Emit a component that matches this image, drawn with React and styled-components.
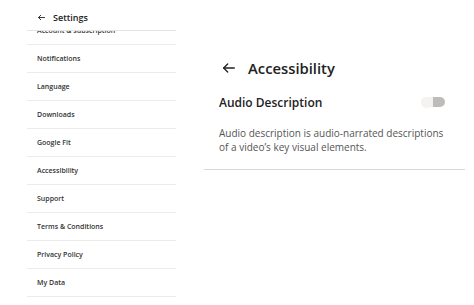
import React from "react";
import styled, { createGlobalStyle } from "styled-components";

const Global = createGlobalStyle`
  html, body { margin: 0; padding: 0; background: #fff; }
  body { font-family: "Open Sans", "Liberation Sans", sans-serif; color: #222; }
  * { box-sizing: border-box; }
`;

const Page = styled.div`
  display: flex;
  width: 474px;
  height: 305px;
  overflow: hidden;
  background: #fff;
`;

const Sidebar = styled.div`
  width: 176px;
  padding-left: 27px;
  display: flex;
  flex-direction: column;
  flex-shrink: 0;
`;

const SideHeader = styled.div`
  height: 31px;
  display: flex;
  align-items: flex-end;
  gap: 7px;
  padding-left: 10px;
  padding-bottom: 6px;
  border-bottom: 1px solid #e4e4e4;
  position: relative;
  z-index: 1;
  background: #fff;
  font-size: 9px;
  font-weight: 600;
  color: #222;
  & > svg { margin-bottom: 2px; }
`;

const Viewport = styled.div`
  flex: 1;
  overflow: hidden;
`;

const List = styled.div`
  margin-top: -14px;
`;

const Row = styled.div`
  height: 28px;
  display: flex;
  align-items: center;
  padding-left: 10px;
  border-bottom: 1px solid #ebebeb;
  font-size: 7px;
  font-weight: 600;
  color: #333;
`;

const Main = styled.div`
  width: 261px;
  margin-left: 28px;
  padding-top: 56px;
`;

const TitleRow = styled.div`
  display: flex;
  align-items: center;
  gap: 11px;
  height: 24px;
  padding-left: 17px;
`;

const Title = styled.div`
  font-size: 14.8px;
  font-weight: 600;
  color: #222;
`;

const SettingRow = styled.div`
  display: flex;
  align-items: center;
  justify-content: space-between;
  height: 20px;
  margin-top: 12px;
  padding-left: 15px;
  padding-right: 20px;
`;

const SettingLabel = styled.div`
  font-size: 12px;
  font-weight: 600;
  color: #222;
`;

const Toggle = styled.div`
  width: 24px;
  height: 10px;
  display: flex;
  align-items: center;
  border-radius: 5px;
  background: linear-gradient(to right, #f2f1ef 50%, #bdbcba 50%);
`;

const Knob = styled.div`
  width: 11px;
  height: 11px;
  border-radius: 50%;
  background: #f4f3f1;
`;

const Description = styled.p`
  margin: 14px 0 0;
  padding: 0 15px 15px;
  font-size: 10px;
  line-height: 14px;
  color: #555;
  border-bottom: 1px solid #d8d8d8;
`;

const Arrow = ({ size, stroke }) => (
  <svg width={size} height={size} viewBox="0 0 24 24" fill="none" stroke="#222" strokeWidth={stroke} strokeLinecap="round" strokeLinejoin="round">
    <path d="M20 12H4" />
    <path d="M10 6l-6 6 6 6" />
  </svg>
);

const items = [
  "Account & subscription",
  "Notifications",
  "Language",
  "Downloads",
  "Google Fit",
  "Accessibility",
  "Support",
  "Terms & Conditions",
  "Privacy Policy",
  "My Data",
];

export default function App() {
  return (
    <>
      <Global />
      <Page>
        <Sidebar>
          <SideHeader>
            <Arrow size={9} stroke={2.4} />
            <span>Settings</span>
          </SideHeader>
          <Viewport>
            <List>
              {items.map((t) => (
                <Row key={t}>{t}</Row>
              ))}
            </List>
          </Viewport>
        </Sidebar>
        <Main>
          <TitleRow>
            <Arrow size={16} stroke={2} />
            <Title>Accessibility</Title>
          </TitleRow>
          <SettingRow>
            <SettingLabel>Audio Description</SettingLabel>
            <Toggle>
              <Knob />
            </Toggle>
          </SettingRow>
          <Description>
            Audio description is audio-narrated descriptions of a video’s key visual elements.
          </Description>
        </Main>
      </Page>
    </>
  );
}
